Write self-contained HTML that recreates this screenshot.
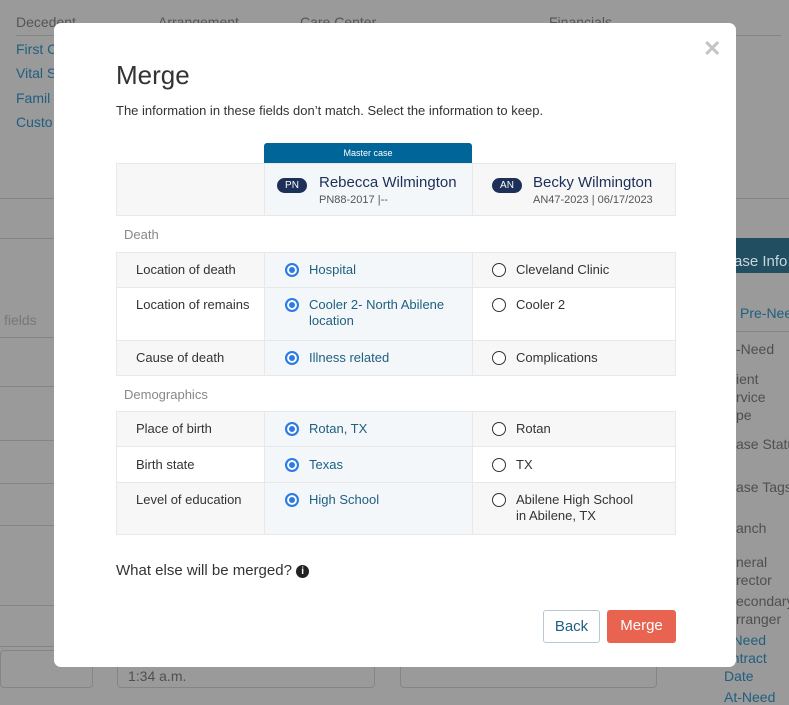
<!DOCTYPE html>
<html><head><meta charset="utf-8"><style>
*{box-sizing:border-box;margin:0;padding:0}
body{width:789px;height:704px;overflow:hidden;background:#9a9a9a;font-family:"Liberation Sans",sans-serif;position:relative;color:#333}
.bg{position:absolute;font-size:14px;color:#4f4f4f;white-space:nowrap}
.bl{color:#1f5f7f}
.hl{position:absolute;height:1px;background:#858585}
.modal{position:absolute;left:54px;top:23px;width:682px;height:644px;background:#fff;border-radius:7px}
.x{position:absolute;left:703px;top:36px;font-size:22px;color:#c4c4c4;font-weight:bold}
h1{position:absolute;left:116px;top:60px;font-size:26px;font-weight:normal;color:#333}
.sub{position:absolute;left:116px;top:103px;font-size:13px;color:#333}
.tab{position:absolute;left:264px;top:143px;width:208px;height:20px;background:#006699;border-radius:3px 3px 0 0;color:#fff;font-size:9px;text-align:center;line-height:20px}
.cell{position:absolute;border:1px solid #e8e8e8;font-size:13px}
.g{background:#f7f7f7}.m{background:#f3f7fa}.w{background:#fff}
.sec{position:absolute;left:124px;font-size:13px;color:#888}
.r{position:absolute;width:14px;height:14px;border-radius:50%}
.on{border:2px solid #2b7be4;background:#2b7be4;box-shadow:inset 0 0 0 2px #fff}
.off{border:1.5px solid #333;background:#fff}
.t{position:absolute;font-size:13px;line-height:16px;white-space:nowrap}
.sel{color:#1f5f80}
.pill{position:absolute;height:15px;border-radius:8px;background:#1d3057;color:#fff;font-size:10px;line-height:15px;text-align:center;width:30px}
.btn{position:absolute;top:610px;height:33px;border-radius:3px;font-size:15px;line-height:31px;text-align:center}
</style></head><body>
<div class="bg" style="left:16px;top:14px;color:#555">Decedent</div>
<div class="bg" style="left:158px;top:14px;color:#555">Arrangement</div>
<div class="bg" style="left:300px;top:14px;color:#555">Care Center</div>
<div class="bg" style="left:549px;top:14px;color:#555">Financials</div>
<div class="hl" style="left:16px;top:35px;width:765px"></div>
<div class="bg bl" style="left:16px;top:41px">First C</div>
<div class="bg bl" style="left:16px;top:65px">Vital S</div>
<div class="bg bl" style="left:16px;top:90px">Famil</div>
<div class="bg bl" style="left:16px;top:114px">Custo</div>
<div class="hl" style="left:0;top:198px;width:789px"></div>
<div class="hl" style="left:0;top:238px;width:54px"></div>
<div class="bg" style="left:4px;top:312px;color:#777">fields</div>
<div class="hl" style="left:0;top:337px;width:54px"></div>
<div class="hl" style="left:0;top:386px;width:54px"></div>
<div class="hl" style="left:0;top:440px;width:54px"></div>
<div class="hl" style="left:0;top:483px;width:54px"></div>
<div class="hl" style="left:0;top:525px;width:54px"></div>
<div class="hl" style="left:0;top:605px;width:54px"></div>
<div class="hl" style="left:0;top:646px;width:54px"></div>
<div style="position:absolute;left:736px;top:238px;width:53px;height:35px;background:#214e60"></div>
<div class="bg" style="left:734px;top:253px;color:#c8d6dc;font-size:15px">ase Info</div>
<div class="hl" style="left:736px;top:331px;width:53px"></div>
<div class="bg bl" style="left:740px;top:305px">Pre-Nee</div>
<div class="bg" style="left:736px;top:341px">-Need</div>
<div class="bg" style="left:736px;top:370px;line-height:18px">ient<br>rvice<br>pe</div>
<div class="bg" style="left:736px;top:436px">ase Statu</div>
<div class="bg" style="left:736px;top:479px">ase Tags</div>
<div class="bg" style="left:736px;top:520px">anch</div>
<div class="bg" style="left:736px;top:553px;line-height:18px">neral<br>rector</div>
<div class="bg" style="left:736px;top:592px;line-height:18px">econdary<br>rranger</div>
<div class="bg bl" style="left:724px;top:631px;line-height:18px">&nbsp;-Need<br>ontract<br>Date</div>
<div class="bg bl" style="left:724px;top:689px">At-Need</div>
<div style="position:absolute;left:0;top:650px;width:93px;height:38px;border:1px solid #858585;border-radius:4px"></div>
<div style="position:absolute;left:117px;top:650px;width:258px;height:38px;border:1px solid #858585;border-radius:4px"></div>
<div class="bg" style="left:128px;top:668px">1:34 a.m.</div>
<div style="position:absolute;left:400px;top:650px;width:257px;height:38px;border:1px solid #858585;border-radius:4px"></div>

<div class="modal"></div>
<div class="x">✕</div>
<h1>Merge</h1>
<div class="sub">The information in these fields don’t match. Select the information to keep.</div>
<div class="tab">Master case</div>

<div class="cell g" style="left:116px;top:163px;width:149px;height:53px"></div>
<div class="cell m" style="left:264px;top:163px;width:209px;height:53px"></div>
<div class="cell g" style="left:472px;top:163px;width:204px;height:53px"></div>
<div class="pill" style="left:277px;top:178px">PN</div>
<div class="t" style="left:319px;top:175px;font-size:15px;color:#1d3057">Rebecca Wilmington</div>
<div class="t" style="left:319px;top:192px;font-size:11px;color:#555">PN88-2017 |--</div>
<div class="pill" style="left:492px;top:178px">AN</div>
<div class="t" style="left:533px;top:175px;font-size:15px;color:#1d3057">Becky Wilmington</div>
<div class="t" style="left:533px;top:192px;font-size:11px;color:#555">AN47-2023 | 06/17/2023</div>

<div class="sec" style="top:227px">Death</div>
<div class="cell g" style="left:116px;top:252px;width:149px;height:36px"></div>
<div class="cell m" style="left:264px;top:252px;width:209px;height:36px"></div>
<div class="cell g" style="left:472px;top:252px;width:204px;height:36px"></div>
<div class="cell w" style="left:116px;top:287px;width:149px;height:54px"></div>
<div class="cell m" style="left:264px;top:287px;width:209px;height:54px"></div>
<div class="cell w" style="left:472px;top:287px;width:204px;height:54px"></div>
<div class="cell g" style="left:116px;top:340px;width:149px;height:36px"></div>
<div class="cell m" style="left:264px;top:340px;width:209px;height:36px"></div>
<div class="cell g" style="left:472px;top:340px;width:204px;height:36px"></div>

<div class="sec" style="top:387px">Demographics</div>
<div class="cell g" style="left:116px;top:411px;width:149px;height:36px"></div>
<div class="cell m" style="left:264px;top:411px;width:209px;height:36px"></div>
<div class="cell g" style="left:472px;top:411px;width:204px;height:36px"></div>
<div class="cell w" style="left:116px;top:446px;width:149px;height:37px"></div>
<div class="cell m" style="left:264px;top:446px;width:209px;height:37px"></div>
<div class="cell w" style="left:472px;top:446px;width:204px;height:37px"></div>
<div class="cell g" style="left:116px;top:482px;width:149px;height:53px"></div>
<div class="cell m" style="left:264px;top:482px;width:209px;height:53px"></div>
<div class="cell g" style="left:472px;top:482px;width:204px;height:53px"></div>

<div class="t" style="left:136px;top:262px">Location of death</div>
<div class="r on" style="left:285px;top:263px"></div><div class="t sel" style="left:309px;top:262px">Hospital</div>
<div class="r off" style="left:492px;top:263px"></div><div class="t" style="left:516px;top:262px">Cleveland Clinic</div>

<div class="t" style="left:136px;top:297px">Location of remains</div>
<div class="r on" style="left:285px;top:298px"></div><div class="t sel" style="left:309px;top:297px">Cooler 2- North Abilene<br>location</div>
<div class="r off" style="left:492px;top:298px"></div><div class="t" style="left:516px;top:297px">Cooler 2</div>

<div class="t" style="left:136px;top:350px">Cause of death</div>
<div class="r on" style="left:285px;top:351px"></div><div class="t sel" style="left:309px;top:350px">Illness related</div>
<div class="r off" style="left:492px;top:351px"></div><div class="t" style="left:516px;top:350px">Complications</div>

<div class="t" style="left:136px;top:421px">Place of birth</div>
<div class="r on" style="left:285px;top:422px"></div><div class="t sel" style="left:309px;top:421px">Rotan, TX</div>
<div class="r off" style="left:492px;top:422px"></div><div class="t" style="left:516px;top:421px">Rotan</div>

<div class="t" style="left:136px;top:457px">Birth state</div>
<div class="r on" style="left:285px;top:458px"></div><div class="t sel" style="left:309px;top:457px">Texas</div>
<div class="r off" style="left:492px;top:458px"></div><div class="t" style="left:516px;top:457px">TX</div>

<div class="t" style="left:136px;top:492px">Level of education</div>
<div class="r on" style="left:285px;top:493px"></div><div class="t sel" style="left:309px;top:492px">High School</div>
<div class="r off" style="left:492px;top:493px"></div><div class="t" style="left:516px;top:492px">Abilene High School<br>in Abilene, TX</div>

<div class="t" style="left:116px;top:562px;font-size:15px;line-height:18px">What else will be merged? <span style="display:inline-block;width:13px;height:13px;border-radius:50%;background:#222;color:#fff;font-size:10px;line-height:13px;text-align:center;font-weight:bold;vertical-align:1px">i</span></div>

<div class="btn" style="left:543px;width:57px;border:1px solid #b8c8d0;color:#1f5f80;background:#fff">Back</div>
<div class="btn" style="left:607px;width:69px;background:#e96450;color:#fff">Merge</div>
</body></html>
